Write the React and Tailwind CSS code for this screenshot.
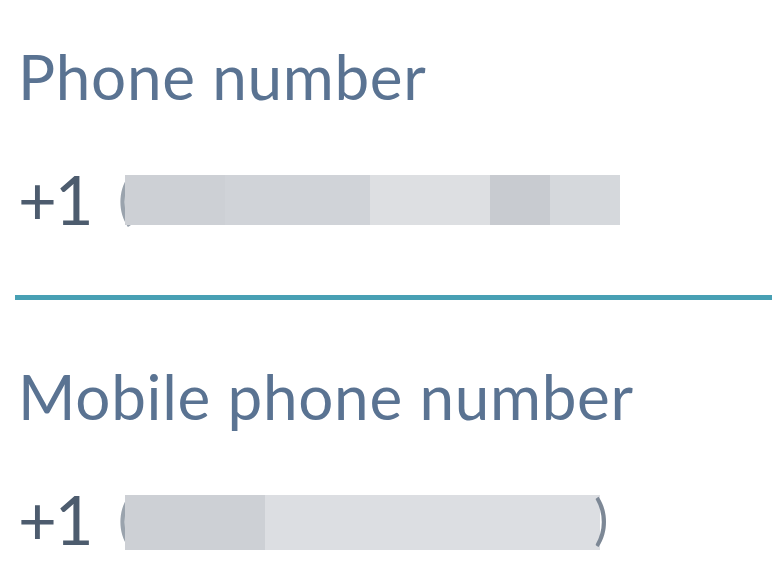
export default function App() {
  const font = { fontFamily: 'Lato, "Noto Sans", sans-serif' };
  return (
    <div className="w-[772px] h-[568px] bg-white overflow-hidden" style={font}>
      <div className="pt-[36px] pl-[18px]">
        <div className="text-[62px] leading-[80px] text-[#5a7392] tracking-[0.7px]">Phone number</div>
        <div className="mt-[53px] flex items-start h-[60px]">
          <span className="w-[100px] text-[67px] leading-[60px] text-[#4d5c6e] tracking-[-2px]">+1</span>
          <span className="w-[7px] text-[54px] leading-[60px] text-[#9aa3ad]">(</span>
          <div className="flex h-[50px] mt-[6px]">
            <div className="w-[100px] bg-[#cdd0d5]" />
            <div className="w-[145px] bg-[#d0d3d8]" />
            <div className="w-[120px] bg-[#dddfe2]" />
            <div className="w-[60px] bg-[#c8cbd0]" />
            <div className="w-[70px] bg-[#d5d8dc]" />
          </div>
        </div>
      </div>
      <div className="mt-[66px] ml-[15px] h-[5px] bg-[#48a0b4]" />
      <div className="pt-[56px] pl-[18px]">
        <div className="text-[62px] leading-[80px] text-[#5a7392] tracking-[0.7px]">Mobile phone number</div>
        <div className="mt-[53px] flex items-start h-[62px]">
          <span className="w-[100px] text-[67px] leading-[60px] text-[#4d5c6e] tracking-[-2px]">+1</span>
          <span className="w-[7px] text-[54px] leading-[60px] text-[#9aa3ad]">(</span>
          <div className="flex h-[55px] mt-[6px]">
            <div className="w-[140px] bg-[#cdd0d5]" />
            <div className="w-[335px] bg-[#dcdee2]" />
          </div>
          <span className="-ml-[6px] text-[54px] leading-[60px] text-[#7d8896]">)</span>
        </div>
      </div>
    </div>
  );
}
